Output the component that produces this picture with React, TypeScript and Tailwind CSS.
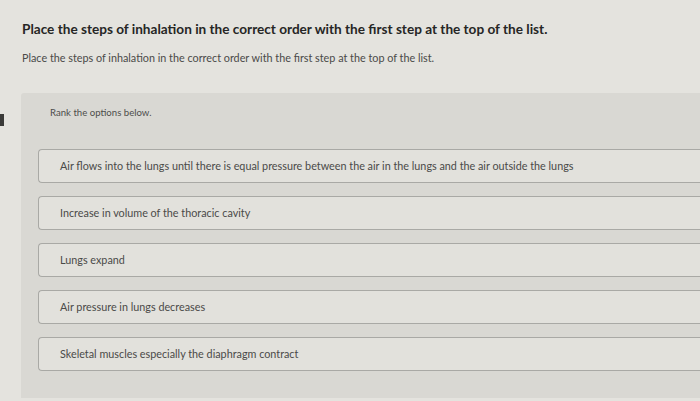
import React from 'react'

const steps = [
  'Air flows into the lungs until there is equal pressure between the air in the lungs and the air outside the lungs',
  'Increase in volume of the thoracic cavity',
  'Lungs expand',
  'Air pressure in lungs decreases',
  'Skeletal muscles especially the diaphragm contract',
]

export default function App() {
  return (
    <div
      className="relative w-[700px] h-[401px] overflow-hidden bg-[#e4e3de] text-[#333331]"
      style={{ fontFamily: 'Lato, "Open Sans", sans-serif' }}
    >
      {/* edge marker */}
      <div className="absolute left-0 top-[114px] w-[4px] h-[12px] bg-[#3a3a38]" />

      <div className="pt-[20px] pl-[22px]">
        <h1 className="text-[13.6px] font-bold leading-[18px] text-[#262625]">
          Place the steps of inhalation in the correct order with the first step at the top of the list.
        </h1>
        <p className="mt-[14px] text-[10.8px] leading-[12px] text-[#4a4a48]">
          Place the steps of inhalation in the correct order with the first step at the top of the list.
        </p>
      </div>

      <section className="mt-[29px] ml-[21px] h-[305px] bg-[#d9d8d3] rounded-tl-[3px] pt-[14px]">
        <p className="pl-[29px] text-[9.6px] leading-[11px] text-[#4d4d4b]">Rank the options below.</p>

        <ul className="mt-[31px] ml-[17px] flex flex-col gap-[13px]">
          {steps.map((s) => (
            <li
              key={s}
              className="h-[34px] flex items-center pl-[21px] bg-[#e2e1dc] border border-r-0 border-[#a9a9a5] rounded-l-[4px] text-[10.8px] text-[#4a4a48] whitespace-nowrap"
            >
              {s}
            </li>
          ))}
        </ul>
      </section>
    </div>
  )
}
